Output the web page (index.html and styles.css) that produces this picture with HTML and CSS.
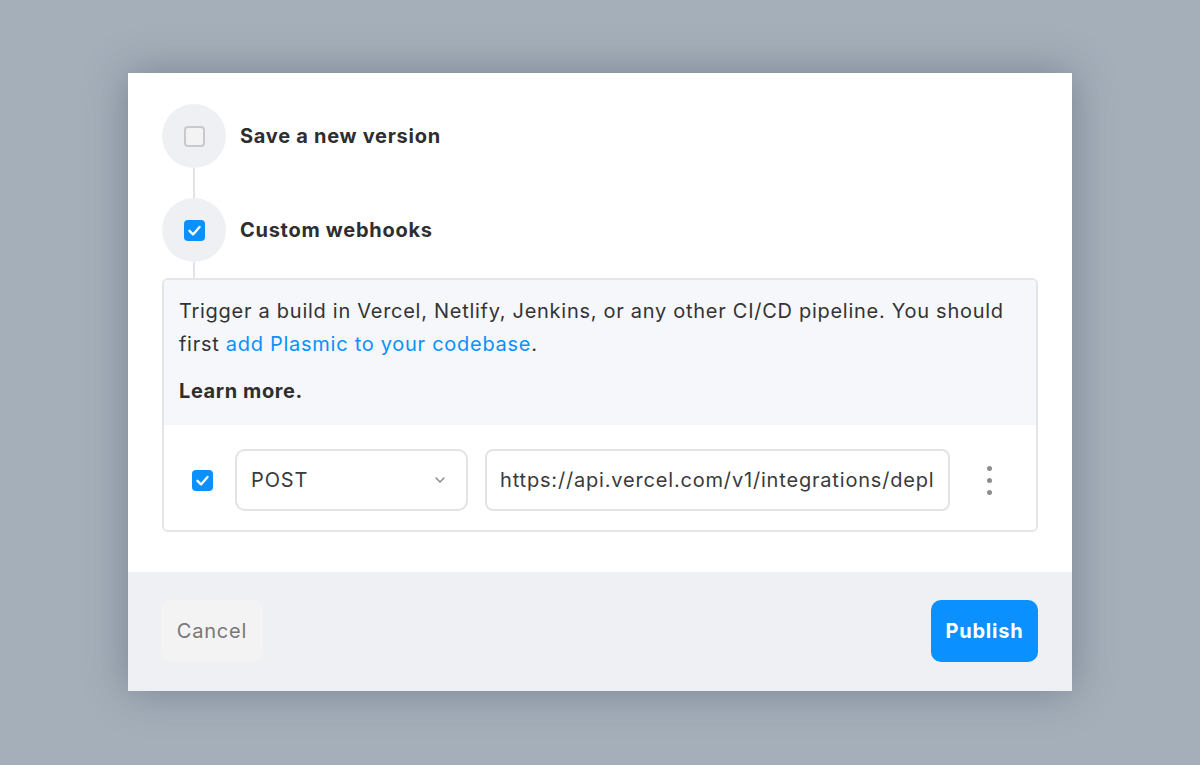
FILE: index.html
```html
<!DOCTYPE html>
<html>
<head>
<meta charset="utf-8">
<link rel="stylesheet" href="styles.css">
</head>
<body>
<div class="stage">
  <div class="modal">
    <div class="modal-body">
      <div class="step">
        <div class="step-circle">
          <span class="cb"></span>
        </div>
        <div class="step-title">Save a new version</div>
      </div>
      <div class="connector connector-long"></div>
      <div class="step">
        <div class="step-circle">
          <span class="cb cb-checked">
            <svg viewBox="0 0 20 20" width="21" height="21"><path d="M5.2 10.3 L8.6 13.7 L14.8 6.6" fill="none" stroke="#fff" stroke-width="2.2" stroke-linecap="round" stroke-linejoin="round"/></svg>
          </span>
        </div>
        <div class="step-title">Custom webhooks</div>
      </div>
      <div class="connector connector-short"></div>
      <div class="card">
        <div class="card-info">
          <p class="info-text">Trigger a build in Vercel, Netlify, Jenkins, or any other CI/CD pipeline. You should first <a class="link">add Plasmic to your codebase</a>.</p>
          <p class="learn">Learn more.</p>
        </div>
        <div class="card-row">
          <span class="cb cb-checked cb-row">
            <svg viewBox="0 0 20 20" width="21" height="21"><path d="M5.2 10.3 L8.6 13.7 L14.8 6.6" fill="none" stroke="#fff" stroke-width="2.2" stroke-linecap="round" stroke-linejoin="round"/></svg>
          </span>
          <div class="select">
            <span class="select-value">POST</span>
            <svg class="chev" viewBox="0 0 12 8" width="12" height="8"><path d="M2 2 L6 6 L10 2" fill="none" stroke="#8a8a8a" stroke-width="1.5" stroke-linecap="round" stroke-linejoin="round"/></svg>
          </div>
          <div class="url-input"><span class="url-text">https://api.vercel.com/v1/integrations/depl</span></div>
          <div class="more">
            <span class="dot"></span><span class="dot"></span><span class="dot"></span>
          </div>
        </div>
      </div>
    </div>
    <div class="modal-footer">
      <button class="btn btn-cancel">Cancel</button>
      <button class="btn btn-publish">Publish</button>
    </div>
  </div>
</div>
</body>
</html>
```

FILE: styles.css
```css
* { box-sizing: border-box; }
html, body {
  margin: 0;
  padding: 0;
  width: 1200px;
  height: 765px;
  overflow: hidden;
}
body {
  background: #a5afba;
  font-family: Inter, "Noto Sans", sans-serif;
  color: #333336;
}
.stage {
  padding-top: 73px;
  padding-left: 128px;
}
.modal {
  width: 944px;
  height: 618px;
  background: #fff;
  box-shadow: 0 0 40px rgba(40, 50, 65, 0.35);
  display: flex;
  flex-direction: column;
}
.modal-body {
  padding: 31px 34px 0 34px;
  height: 499px;
}
.step {
  display: flex;
  align-items: center;
  height: 64px;
}
.step-circle {
  width: 64px;
  height: 64px;
  border-radius: 50%;
  background: #eff0f4;
  display: flex;
  align-items: center;
  justify-content: center;
  flex: none;
}
.step-title {
  margin-left: 14px;
  font-size: 20px;
  font-weight: 700;
  letter-spacing: 0.72px;
  color: #2e2e30;
}
.connector {
  width: 2px;
  background: #e3e4e8;
  margin-left: 31px;
}
.connector-long { height: 30px; }
.connector-short { height: 16px; }
.cb {
  width: 21px;
  height: 21px;
  border-radius: 4px;
  border: 2px solid #c9c9cb;
  background: #f3f3f4;
  display: flex;
  align-items: center;
  justify-content: center;
}
.cb-checked {
  border: none;
  background: #0a91ff;
}
.card {
  border: 2px solid #e4e5e9;
  border-radius: 6px;
  overflow: hidden;
}
.card-info {
  background: #f6f7fa;
  padding: 15px 15px 17px 15px;
}
.info-text {
  margin: 0;
  font-size: 20px;
  line-height: 33px;
  letter-spacing: 0.72px;
  color: #333336;
}
.link { color: #0a91ff; }
.learn {
  margin: 14px 0 0 0;
  font-size: 20px;
  line-height: 33px;
  font-weight: 700;
  letter-spacing: 0.6px;
  color: #2e2e30;
}
.card-row {
  display: flex;
  align-items: center;
  padding: 24px 0 19px 28px;
  background: #fff;
}
.cb-row { flex: none; }
.select {
  margin-left: 22px;
  width: 233px;
  height: 62px;
  border: 2px solid #e3e3e6;
  border-radius: 10px;
  display: flex;
  align-items: center;
  justify-content: space-between;
  padding: 0 20px 0 14px;
  font-size: 20px;
  letter-spacing: 0.9px;
  color: #3a3a3c;
}
.url-input {
  margin-left: 17px;
  width: 465px;
  height: 62px;
  border: 2px solid #e3e3e6;
  border-radius: 8px;
  display: flex;
  align-items: center;
  padding: 0 13px;
  font-size: 20px;
  letter-spacing: 0.82px;
  color: #3a3a3c;
  white-space: nowrap;
  overflow: hidden;
}
.url-text { flex: none; }
.more {
  margin-left: 37px;
  display: flex;
  flex-direction: column;
  gap: 7px;
  align-items: center;
}
.dot {
  width: 5px;
  height: 5px;
  border-radius: 50%;
  background: #8e8e8e;
}
.modal-footer {
  flex: 1;
  background: #eff0f4;
  display: flex;
  justify-content: space-between;
  align-items: flex-start;
  padding: 28px 34px 0 33px;
}
.btn {
  height: 62px;
  border: none;
  border-radius: 10px;
  font-family: Inter, "Noto Sans", sans-serif;
  font-size: 20px;
  padding: 0;
}
.btn-cancel {
  background: #f3f3f3;
  color: #77777a;
  letter-spacing: 0.8px;
  width: 102px;
}
.btn-publish {
  background: #0a91ff;
  color: #fff;
  font-weight: 700;
  letter-spacing: 0.8px;
  width: 107px;
}
```
